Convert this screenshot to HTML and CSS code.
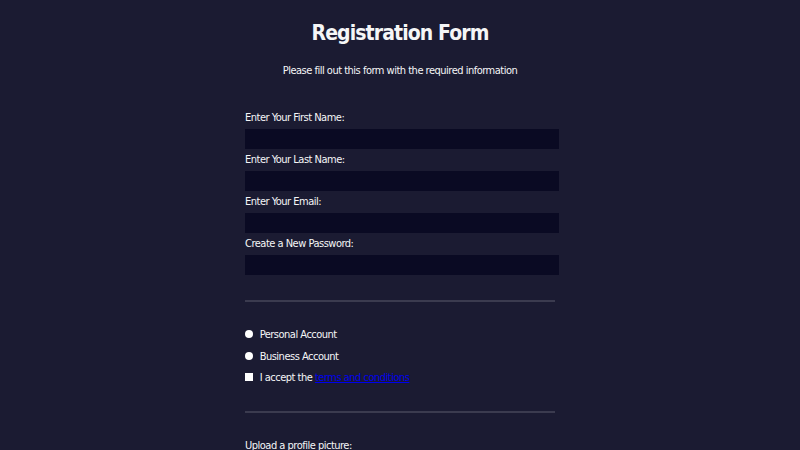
FILE: index.html
```html
<!DOCTYPE html>
<html lang="en">
<head>
<meta charset="utf-8">
<title>Registration Form</title>
<link rel="stylesheet" href="styles.css">
</head>
<body>
<h1 class="title">Registration Form</h1>
<p class="intro">Please fill out this form with the required information</p>
<form class="form">
  <fieldset class="group">
    <label class="field-label" for="first-name">Enter Your First Name:</label>
    <input class="text-input" id="first-name" type="text">
    <label class="field-label" for="last-name">Enter Your Last Name:</label>
    <input class="text-input" id="last-name" type="text">
    <label class="field-label" for="email">Enter Your Email:</label>
    <input class="text-input" id="email" type="email">
    <label class="field-label" for="password">Create a New Password:</label>
    <input class="text-input" id="password" type="password">
  </fieldset>
  <fieldset class="group group-options">
    <label class="option"><input class="radio" type="radio" name="account"> Personal Account</label>
    <label class="option"><input class="radio" type="radio" name="account"> Business Account</label>
    <label class="option"><input class="checkbox" type="checkbox"> I accept the <a class="link" href="#">terms and conditions</a></label>
  </fieldset>
  <fieldset class="group group-last">
    <label class="field-label" for="pic">Upload a profile picture:</label>
  </fieldset>
</form>
</body>
</html>
```

FILE: styles.css
```css
html, body {
  margin: 0;
  padding: 0;
}
body {
  background: #1b1b32;
  color: #f5f6f7;
  font-family: "DejaVu Sans Condensed", "DejaVu Sans", Tahoma, sans-serif;
  font-size: 11px;
  letter-spacing: -0.5px;
  overflow: hidden;
  height: 450px;
}
.title {
  margin: 20px 0 0;
  text-align: center;
  font-size: 21px;
  line-height: 26px;
  font-weight: bold;
  letter-spacing: -0.9px;
}
.intro {
  margin: 18px 0 0;
  text-align: center;
  line-height: 14px;
}
.form {
  width: 310px;
  margin: 0 auto;
}
.group {
  border: none;
  margin: 0;
  padding: 29px 0 25px;
  border-bottom: 2px solid #3b3b4f;
  min-width: 0;
}
.group-last {
  border-bottom: none;
  padding-top: 22px;
}
.field-label {
  display: block;
  line-height: 13px;
  margin-top: 4px;
}
.text-input {
  display: block;
  box-sizing: border-box;
  width: 314px;
  height: 20px;
  margin: 5px 0 0;
  padding: 0 2px;
  background: #0a0a23;
  border: 1px solid #0a0a23;
  color: #fff;
}
.group-options {
  padding: 26px 0 18px;
}
.option {
  display: block;
  line-height: 13px;
  margin-bottom: 8.5px;
}
.radio, .checkbox {
  appearance: none;
  -webkit-appearance: none;
  display: inline-block;
  vertical-align: middle;
  width: 8px;
  height: 8px;
  margin: -2px 4px 0 0;
  background: #fff;
  border: none;
}
.radio {
  border-radius: 50%;
}
.link {
  color: #0000ee;
  text-decoration: underline;
}
```
